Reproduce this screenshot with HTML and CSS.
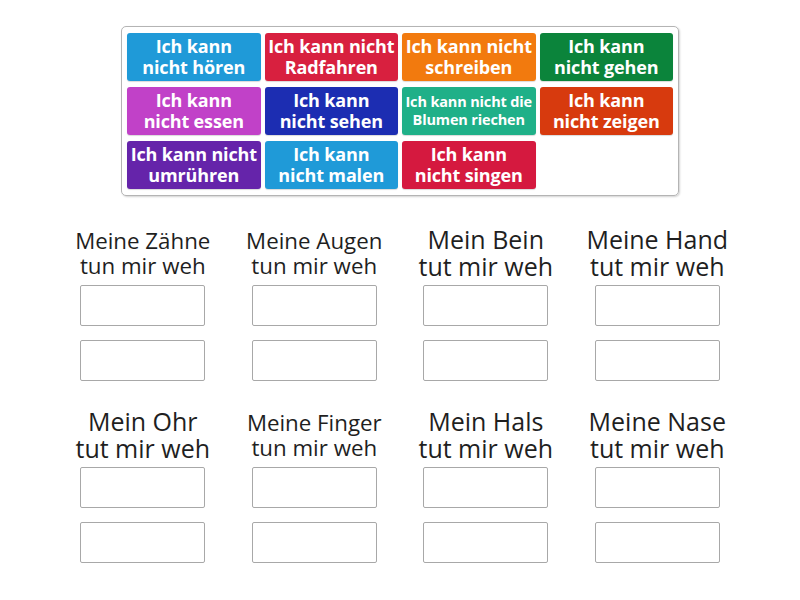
FILE: index.html
```html
<!DOCTYPE html>
<html lang="de">
<head>
<meta charset="utf-8">
<title>Gruppensortierung</title>
<link rel="stylesheet" href="styles.css">
</head>
<body>
<div class="page">
  <div class="bank">
    <div class="tile c-sky">Ich kann<br>nicht hören</div>
    <div class="tile c-red">Ich kann nicht<br>Radfahren</div>
    <div class="tile c-orange">Ich kann nicht<br>schreiben</div>
    <div class="tile c-green">Ich kann<br>nicht gehen</div>
    <div class="tile c-magenta">Ich kann<br>nicht essen</div>
    <div class="tile c-navy">Ich kann<br>nicht sehen</div>
    <div class="tile c-teal small">Ich kann nicht die<br>Blumen riechen</div>
    <div class="tile c-rust">Ich kann<br>nicht zeigen</div>
    <div class="tile c-purple">Ich kann nicht<br>umrühren</div>
    <div class="tile c-sky">Ich kann<br>nicht malen</div>
    <div class="tile c-crimson">Ich kann<br>nicht singen</div>
  </div>

  <div class="groups">
    <div class="group">
      <div class="heading">Meine Zähne<br>tun mir weh</div>
      <div class="slot"></div>
      <div class="slot"></div>
    </div>
    <div class="group">
      <div class="heading">Meine Augen<br>tun mir weh</div>
      <div class="slot"></div>
      <div class="slot"></div>
    </div>
    <div class="group">
      <div class="heading big">Mein Bein<br>tut mir weh</div>
      <div class="slot"></div>
      <div class="slot"></div>
    </div>
    <div class="group">
      <div class="heading big">Meine Hand<br>tut mir weh</div>
      <div class="slot"></div>
      <div class="slot"></div>
    </div>
    <div class="group">
      <div class="heading big">Mein Ohr<br>tut mir weh</div>
      <div class="slot"></div>
      <div class="slot"></div>
    </div>
    <div class="group">
      <div class="heading">Meine Finger<br>tun mir weh</div>
      <div class="slot"></div>
      <div class="slot"></div>
    </div>
    <div class="group">
      <div class="heading big">Mein Hals<br>tut mir weh</div>
      <div class="slot"></div>
      <div class="slot"></div>
    </div>
    <div class="group">
      <div class="heading big">Meine Nase<br>tut mir weh</div>
      <div class="slot"></div>
      <div class="slot"></div>
    </div>
  </div>
</div>
</body>
</html>
```

FILE: styles.css
```css
* { box-sizing: border-box; }

html, body {
  margin: 0;
  padding: 0;
  background: #ffffff;
}

body {
  font-family: "Open Sans", "Noto Sans", "Liberation Sans", sans-serif;
  color: #222222;
}

.page {
  width: 800px;
  height: 600px;
  padding-top: 26px;
  display: flex;
  flex-direction: column;
  align-items: center;
}

.bank {
  width: 558px;
  height: 170px;
  border: 1px solid #b4b4b4;
  border-radius: 5px;
  box-shadow: 1px 1px 2px rgba(0, 0, 0, 0.18);
  padding: 6px 5px;
  display: grid;
  grid-template-columns: repeat(4, 1fr);
  grid-template-rows: repeat(3, 48px);
  column-gap: 4px;
  row-gap: 6px;
}

.tile {
  border-radius: 3px;
  color: #ffffff;
  font-weight: 700;
  font-size: 18px;
  line-height: 21px;
  text-align: center;
  display: flex;
  align-items: center;
  justify-content: center;
  white-space: nowrap;
  letter-spacing: -0.15px;
  box-shadow: 0 1px 1px rgba(0, 0, 0, 0.15);
}

.tile.small {
  font-size: 14.5px;
  line-height: 18px;
}

.c-sky { background: #1f9ad8; }
.c-red { background: #d8203f; }
.c-orange { background: #f27a0e; }
.c-green { background: #0b843b; }
.c-magenta { background: #c141c8; }
.c-navy { background: #1c2db2; }
.c-teal { background: #1fb088; }
.c-rust { background: #d73a0e; }
.c-purple { background: #6524aa; }
.c-crimson { background: #d5193f; }

.groups {
  margin-top: 31px;
  width: 686px;
  display: grid;
  grid-template-columns: repeat(4, 171.5px);
  row-gap: 28px;
}

.group {
  display: flex;
  flex-direction: column;
  align-items: center;
}

.heading {
  height: 52px;
  font-size: 22.3px;
  line-height: 25px;
  text-align: center;
  white-space: nowrap;
  color: #1f1f1f;
  display: flex;
  align-items: center;
  justify-content: center;
  margin-bottom: 6px;
}

.heading.big {
  font-size: 25px;
  line-height: 27px;
}

.slot {
  width: 125px;
  height: 41px;
  border: 1px solid #a8a8a8;
  border-radius: 2px;
  background: #ffffff;
}

.slot + .slot {
  margin-top: 14px;
}
```
